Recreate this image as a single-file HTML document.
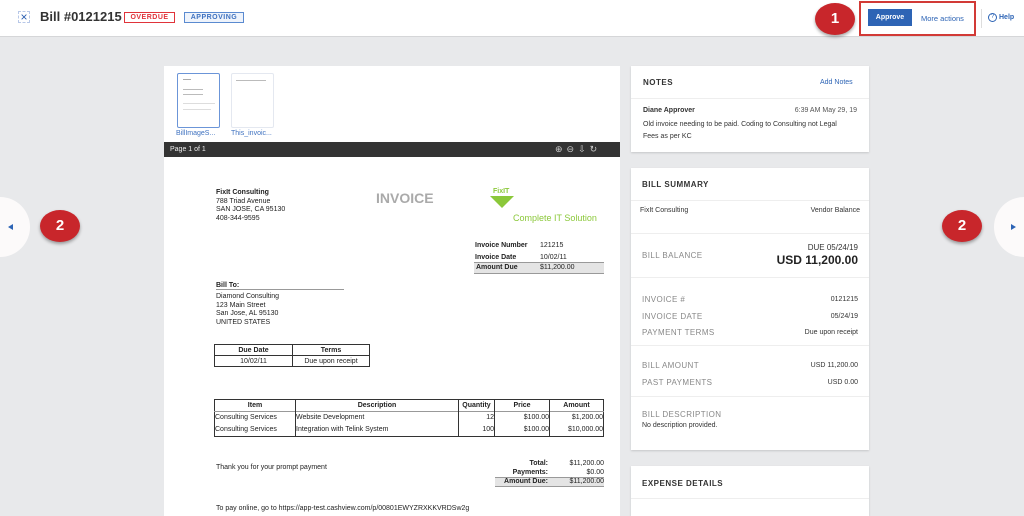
<!DOCTYPE html>
<html><head><meta charset="utf-8"><style>
*{box-sizing:border-box;margin:0;padding:0}
html,body{width:1024px;height:516px;overflow:hidden}
body{background:#e8e9eb;font-family:"Liberation Sans",sans-serif;position:relative;color:#333}
.a{position:absolute}
.top{left:0;top:0;width:1024px;height:37px;background:#fff;border-bottom:1px solid #d5d6d8}
.card{background:#fff;box-shadow:0 1px 2px rgba(0,0,0,.15)}
.h{font-size:8px;font-weight:bold;letter-spacing:.5px;color:#333}
.lbl{font-size:8px;color:#888;letter-spacing:.4px}
.v{font-size:7px;color:#333}
.doc{font-size:7px;color:#222}
table{border-collapse:collapse}
.badge{background:#c8262b;color:#fff;border-radius:50%;font-weight:bold;font-size:15px;text-align:center;box-shadow:0 2px 3px rgba(0,0,0,.35)}
</style></head><body>
<div class="a top"></div>
<div class="a" style="left:18px;top:11px;width:12px;height:12px;border:1px dashed #b8c8e8;color:#2a5db0;font-size:12px;line-height:10px;text-align:center">×</div>
<div class="a" style="left:40px;top:9px;font-size:13px;font-weight:bold;color:#333">Bill #0121215</div>
<div class="a" style="left:124px;top:12px;width:51px;height:11px;border:1px solid #e0333a;color:#e0333a;font-size:7px;font-weight:bold;text-align:center;line-height:9px;letter-spacing:.5px">OVERDUE</div>
<div class="a" style="left:184px;top:12px;width:60px;height:11px;border:1px solid #5a8ad0;background:#eef3fb;color:#3f72c0;font-size:7px;font-weight:bold;text-align:center;line-height:9px;letter-spacing:.5px">APPROVING</div>
<div class="a badge" style="left:815px;top:3px;width:40px;height:32px;line-height:32px">1</div>
<div class="a" style="left:859px;top:1px;width:117px;height:35px;border:2px solid #d23a36"></div>
<div class="a" style="left:868px;top:9px;width:44px;height:17px;background:#2d64b5;color:#fff;font-size:7px;font-weight:bold;display:flex;align-items:center;justify-content:center">Approve</div>
<div class="a" style="left:921px;top:14px;font-size:7.5px;color:#2d64b5">More actions</div>
<div class="a" style="left:981px;top:9px;width:1px;height:19px;background:#ddd"></div>
<div class="a" style="left:988px;top:13px;width:9px;height:9px;border:1px solid #2d64b5;border-radius:50%;font-size:6px;text-align:center;line-height:7px;color:#2d64b5">?</div>
<div class="a" style="left:999px;top:14px;font-size:7px;color:#2d64b5;font-weight:bold">Help</div>

<div class="a" style="left:-30px;top:197px;width:60px;height:60px;border-radius:50%;background:#fcfafa"></div>
<div class="a" style="left:8px;top:224px;width:0;height:0;border-top:3px solid transparent;border-bottom:3px solid transparent;border-right:5px solid #2d64b5"></div>
<div class="a badge" style="left:40px;top:210px;width:40px;height:32px;line-height:32px">2</div>
<div class="a" style="left:994px;top:197px;width:60px;height:60px;border-radius:50%;background:#fcfafa"></div>
<div class="a" style="left:1011px;top:224px;width:0;height:0;border-top:3px solid transparent;border-bottom:3px solid transparent;border-left:5px solid #2d64b5"></div>
<div class="a badge" style="left:942px;top:210px;width:40px;height:32px;line-height:32px">2</div>

<!-- doc panel -->
<div class="a" style="left:164px;top:66px;width:456px;height:450px;background:#fff"></div>
<div class="a" style="left:177px;top:73px;width:43px;height:55px;border:1px solid #6b95d8;border-radius:2px;background:#fff"></div>
<div class="a" style="left:183px;top:79px;width:8px;height:1px;background:#aaa"></div>
<div class="a" style="left:183px;top:89px;width:20px;height:1px;background:#bbb"></div>
<div class="a" style="left:183px;top:94px;width:20px;height:1px;background:#bbb"></div>
<div class="a" style="left:183px;top:103px;width:32px;height:1px;background:#ddd"></div>
<div class="a" style="left:183px;top:109px;width:28px;height:1px;background:#ddd"></div>
<div class="a" style="left:231px;top:73px;width:43px;height:55px;border:1px solid #e4e8f0;border-radius:2px"></div>
<div class="a" style="left:236px;top:80px;width:30px;height:1px;background:#bbb"></div>
<div class="a" style="left:176px;top:130px;font-size:7px;color:#3f72c0">BillImageS...</div>
<div class="a" style="left:231px;top:130px;font-size:7px;color:#3f72c0">This_invoic...</div>
<div class="a" style="left:164px;top:142px;width:456px;height:15px;background:#333;color:#eee;font-size:7px;line-height:15px;padding-left:6px">Page 1 of 1</div>
<div class="a" style="left:555px;top:144px;color:#ccc;font-size:9px;letter-spacing:4px">⊕⊖⇩↻</div>

<div class="a doc" style="left:216px;top:189px;line-height:8.7px"><b>FixIt Consulting</b><br>788 Triad Avenue<br>SAN JOSE, CA 95130<br>408-344-9595</div>
<div class="a" style="left:376px;top:190px;font-size:14px;font-weight:bold;color:#aaa">INVOICE</div>
<div class="a" style="left:490px;top:196px;width:24px;height:12px;background:#8bc83a;clip-path:polygon(0 0,100% 0,50% 100%)"></div>
<div class="a" style="left:493px;top:188px;font-size:7px;color:#8bc83a;font-weight:bold">FixIT</div>
<div class="a" style="left:513px;top:213px;font-size:9px;color:#8bc83a">Complete IT Solution</div>
<div class="a doc" style="left:475px;top:240px;line-height:12px"><b>Invoice Number</b><br><b>Invoice Date</b></div>
<div class="a doc" style="left:540px;top:240px;line-height:12px">121215<br>10/02/11</div>
<div class="a doc" style="left:474px;top:262px;width:130px;height:12px;background:#e4e4e4;border-top:1px solid #999;border-bottom:1px solid #999;line-height:10px;padding-left:2px"><b>Amount Due</b><span style="position:absolute;left:66px">$11,200.00</span></div>
<div class="a doc" style="left:216px;top:282px;width:128px;border-bottom:1px solid #999"><b>Bill To:</b></div>
<div class="a doc" style="left:216px;top:293px;line-height:8.7px">Diamond Consulting<br>123 Main Street<br>San Jose, AL 95130<br>UNITED STATES</div>
<table class="a doc" style="left:214px;top:344px;width:156px;border:1px solid #333;text-align:center">
<tr style="height:11px"><td style="width:78px;border:1px solid #333"><b>Due Date</b></td><td style="border:1px solid #333"><b>Terms</b></td></tr>
<tr style="height:11px"><td style="border:1px solid #333">10/02/11</td><td style="border:1px solid #333">Due upon receipt</td></tr></table>
<table class="a doc" style="left:214px;top:399px;width:390px;border:1px solid #333">
<tr style="height:12px;text-align:center;border-bottom:1px solid #999"><td style="width:81px;border-right:1px solid #333"><b>Item</b></td><td style="width:163px;border-right:1px solid #333"><b>Description</b></td><td style="width:36px;border-right:1px solid #333"><b>Quantity</b></td><td style="width:55px;border-right:1px solid #333"><b>Price</b></td><td><b>Amount</b></td></tr>
<tr style="height:12px"><td style="border-right:1px solid #333">Consulting Services</td><td style="border-right:1px solid #333">Website Development</td><td style="text-align:right;border-right:1px solid #333">12</td><td style="text-align:right;border-right:1px solid #333">$100.00</td><td style="text-align:right">$1,200.00</td></tr>
<tr style="height:13px"><td style="border-right:1px solid #333">Consulting Services</td><td style="border-right:1px solid #333">Integration with Telink System</td><td style="text-align:right;border-right:1px solid #333">100</td><td style="text-align:right;border-right:1px solid #333">$100.00</td><td style="text-align:right">$10,000.00</td></tr></table>
<div class="a doc" style="left:216px;top:464px">Thank you for your prompt payment</div>
<div class="a doc" style="left:500px;top:459px;width:48px;text-align:right;line-height:9px"><b>Total:<br>Payments:</b></div>
<div class="a doc" style="left:548px;top:459px;width:56px;text-align:right;line-height:9px">$11,200.00<br>$0.00</div>
<div class="a doc" style="left:495px;top:477px;width:109px;height:10px;background:#e4e4e4;border-top:1px solid #999;border-bottom:1px solid #999;line-height:8px"><b style="position:absolute;right:56px">Amount Due:</b><span style="position:absolute;right:0">$11,200.00</span></div>
<div class="a doc" style="left:216px;top:505px">To pay online, go to https://app-test.cashview.com/p/00801EWYZRXKKVRDSw2g</div>

<!-- right cards -->
<div class="a card" style="left:631px;top:66px;width:238px;height:86px"></div>
<div class="a h" style="left:643px;top:78px">NOTES</div>
<div class="a" style="left:820px;top:79px;font-size:7px;color:#2d64b5">Add Notes</div>
<div class="a" style="left:631px;top:98px;width:238px;height:1px;background:#eee"></div>
<div class="a v" style="left:643px;top:107px;font-weight:bold">Diane Approver</div>
<div class="a v" style="left:780px;top:107px;width:77px;text-align:right;color:#555">6:39 AM May 29, 19</div>
<div class="a v" style="left:643px;top:119px;line-height:12px">Old invoice needing to be paid. Coding to Consulting not Legal<br>Fees as per KC</div>

<div class="a card" style="left:631px;top:168px;width:238px;height:282px"></div>
<div class="a h" style="left:642px;top:180px">BILL SUMMARY</div>
<div class="a" style="left:631px;top:200px;width:238px;height:1px;background:#eee"></div>
<div class="a v" style="left:640px;top:207px">FixIt Consulting</div>
<div class="a v" style="left:780px;top:207px;width:80px;text-align:right">Vendor Balance</div>
<div class="a" style="left:631px;top:233px;width:238px;height:1px;background:#eee"></div>
<div class="a lbl" style="left:642px;top:251px">BILL BALANCE</div>
<div class="a" style="left:760px;top:243px;width:98px;text-align:right;font-size:8px;color:#333">DUE 05/24/19</div>
<div class="a" style="left:740px;top:253px;width:118px;text-align:right;font-size:12px;font-weight:bold;color:#222">USD 11,200.00</div>
<div class="a" style="left:631px;top:277px;width:238px;height:1px;background:#eee"></div>
<div class="a lbl" style="left:642px;top:292px;line-height:16.5px">INVOICE #<br>INVOICE DATE<br>PAYMENT TERMS</div>
<div class="a v" style="left:760px;top:292px;width:98px;text-align:right;line-height:16.5px">0121215<br>05/24/19<br>Due upon receipt</div>
<div class="a" style="left:631px;top:345px;width:238px;height:1px;background:#eee"></div>
<div class="a lbl" style="left:642px;top:358px;line-height:16.5px">BILL AMOUNT<br>PAST PAYMENTS</div>
<div class="a v" style="left:760px;top:358px;width:98px;text-align:right;line-height:16.5px">USD 11,200.00<br>USD 0.00</div>
<div class="a" style="left:631px;top:396px;width:238px;height:1px;background:#eee"></div>
<div class="a lbl" style="left:642px;top:410px">BILL DESCRIPTION</div>
<div class="a v" style="left:642px;top:422px">No description provided.</div>

<div class="a card" style="left:631px;top:466px;width:238px;height:50px"></div>
<div class="a h" style="left:642px;top:479px">EXPENSE DETAILS</div>
<div class="a" style="left:631px;top:498px;width:238px;height:1px;background:#eee"></div>
</body></html>
